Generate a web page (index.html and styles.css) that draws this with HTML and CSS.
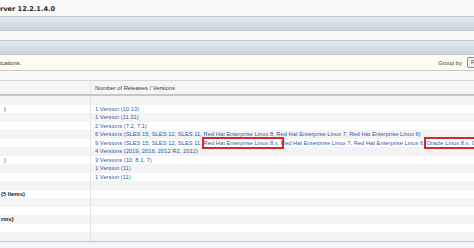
FILE: index.html
```html
<!DOCTYPE html>
<html lang="en">
<head>
    <meta charset="UTF-8">
    <title>Supported Platforms</title>
    <link rel="stylesheet" href="styles.css">
</head>
<body>
    <div class="title">rver 12.2.1.4.0</div>
    <div class="bar"></div>
    <div class="spacer"></div>
    <div class="bar"></div>
    <div class="info">
        <span>ications.</span>
        <span class="group">Group by <span class="group-btn">F</span></span>
    </div>
    <div class="table">
        <div class="thead">
            <div class="c1"></div>
            <div class="c2">Number of Releases / Versions</div>
        </div>
        <div class="row"><div class="c1"></div><div class="c2"></div></div>
        <div class="row"><div class="c1">)</div><div class="c2"><a>1 Version</a> <a>(10.13)</a></div></div>
        <div class="row"><div class="c1"></div><div class="c2"><a>1 Version</a> <a>(11.31)</a></div></div>
        <div class="row"><div class="c1"></div><div class="c2"><a>2 Versions</a> <a>(7.2, 7.1)</a></div></div>
        <div class="row"><div class="c1"></div><div class="c2"><a>6 Versions</a> <a>(SLES 15, SLES 12, SLES 11, Red Hat Enterprise Linux 8, Red Hat Enterprise Linux 7, Red Hat Enterprise Linux 6)</a></div></div>
        <div class="row"><div class="c1"></div><div class="c2"><a>9 Versions</a> <a>(SLES 15, SLES 12, SLES 11, <span class="mark mark-a">Red Hat Enterprise Linux 8.x,</span> Red Hat Enterprise Linux 7, Red Hat Enterprise Linux 6, <span class="mark mark-b">Oracle Linux 8.x,</span> Oracle Linux 7.x)</a></div></div>
        <div class="row"><div class="c1"></div><div class="c2"><a>4 Versions</a> <a>(2019, 2016, 2012 R2, 2012)</a></div></div>
        <div class="row"><div class="c1">)</div><div class="c2"><a>3 Versions</a> <a>(10, 8.1, 7)</a></div></div>
        <div class="row"><div class="c1"></div><div class="c2"><a>1 Version</a> <a>(11)</a></div></div>
        <div class="row"><div class="c1"></div><div class="c2"><a>1 Version</a> <a>(11)</a></div></div>
        <div class="row"><div class="c1"></div><div class="c2"></div></div>
        <div class="row"><div class="c1 bold">(5 Items)</div><div class="c2"></div></div>
        <div class="row"><div class="c1"></div><div class="c2"></div></div>
        <div class="row"><div class="c1"></div><div class="c2"></div></div>
        <div class="row"><div class="c1 bold">rms)</div><div class="c2"></div></div>
        <div class="row"><div class="c1"></div><div class="c2"></div></div>
        <div class="row"><div class="c1"></div><div class="c2"></div></div>
    </div>
    <div class="foot"></div>
</body>
</html>
```

FILE: styles.css
```css
body {
    margin: 0;
    background-color: #fafafa;
    font-family: 'Liberation Sans', Arial, sans-serif;
    font-size: 5.8px;
    color: #333;
    overflow: hidden;
    height: 248px;
}

.title {
    height: 16px;
    line-height: 18px;
    font-family: 'DejaVu Sans', Verdana, sans-serif;
    font-weight: bold;
    font-size: 6.6px;
    color: #1e1e1e;
    border-bottom: 1px solid #bfc7d0;
}

.bar {
    height: 13px;
    background: linear-gradient(to bottom, #e6eaf0, #ccd4dd);
    border-bottom: 1px solid #c2cad3;
}

.spacer {
    height: 9px;
    background-color: #fafafa;
    border-bottom: 1px solid #bfc7d0;
}

.info {
    height: 15px;
    display: flex;
    align-items: center;
    justify-content: space-between;
    background-color: #fffcef;
    border-bottom: 1px solid #c9c9c9;
    white-space: nowrap;
    overflow-x: clip;
}

.group {
    display: flex;
    align-items: center;
    gap: 5px;
    color: #444;
    margin-right: -12px;
}

.group-btn {
    display: inline-block;
    width: 14px;
    height: 9px;
    line-height: 9px;
    padding-left: 3px;
    border: 1px solid #8a8a8a;
    border-radius: 2px;
    background-color: #f4f4f4;
}

.table {
    margin-top: 9px;
    background-color: #fff;
    border-top: 1px solid #d4d4d4;
    border-bottom: 1px solid #b7c4cf;
}

.thead {
    display: flex;
    height: 13px;
    background-color: #f5f5f5;
    border-bottom: 2px solid #c6c6c6;
}

.thead .c2 {
    padding-top: 3px;
    line-height: 9px;
    color: #3a3a3a;
}

.row {
    display: flex;
    height: 8.5px;
    line-height: 8.5px;
    white-space: nowrap;
}

.row:nth-child(even) {
    background-color: #f4f4f4;
}

.c1 {
    width: 91px;
    flex: none;
    padding-left: 4px;
    box-sizing: border-box;
    border-right: 1px solid #e4e4e4;
    overflow: hidden;
}

.c1.bold {
    padding-left: 1px;
    font-weight: bold;
    color: #222;
}

.c2 {
    flex: 1;
    padding-left: 4px;
    min-width: 0;
    overflow-x: clip;
}

.c2 a {
    color: #2f5ea6;
}

.mark {
    position: relative;
}

.mark::after {
    content: '';
    position: absolute;
    top: -3px;
    bottom: -3px;
    left: -2px;
    right: -5px;
    border: 2px solid #d9272e;
}

.mark-b::after {
    left: -3px;
    right: -40px;
}

.foot {
    height: 10px;
    background-color: #f2f6f9;
}
```
